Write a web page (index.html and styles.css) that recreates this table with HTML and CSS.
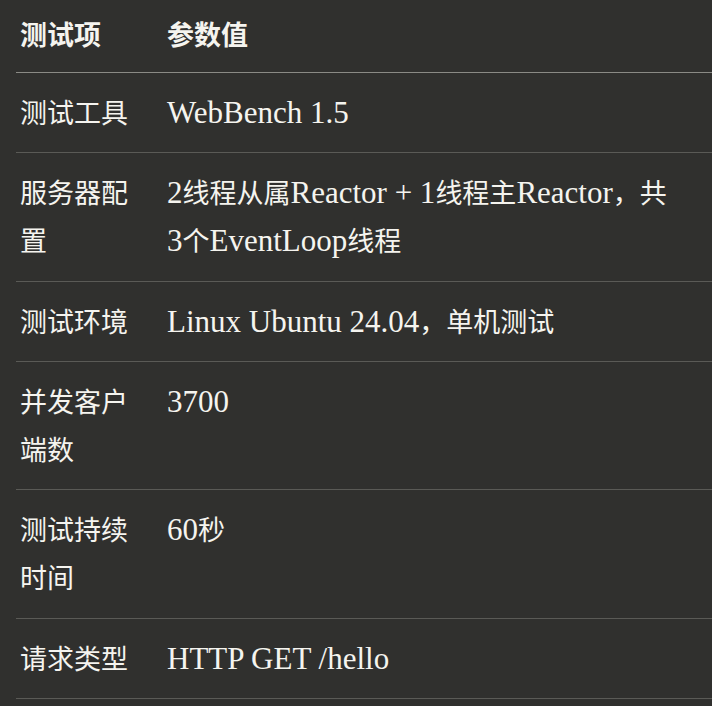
FILE: index.html
```html
<!DOCTYPE html>
<html lang="zh">

<head>
  <meta charset="UTF-8">
  <meta name="viewport" content="width=device-width, initial-scale=1.0">
  <title>测试参数</title>
  <link rel="stylesheet" href="styles.css">
</head>

<body>
  <table class="spec-table">
    <thead>
      <tr>
        <th class="col-key">测试项</th>
        <th>参数值</th>
      </tr>
    </thead>
    <tbody>
      <tr>
        <td class="col-key">测试工具</td>
        <td><span class="latin">WebBench 1.5</span></td>
      </tr>
      <tr>
        <td class="col-key">服务器配置</td>
        <td><span class="latin">2</span>线程从属<span class="latin">Reactor + 1</span>线程主<span class="latin">Reactor</span>，共<span class="keep"><span class="latin">3</span>个</span><span class="latin">EventLoop</span>线程</td>
      </tr>
      <tr>
        <td class="col-key">测试环境</td>
        <td><span class="latin">Linux Ubuntu 24.04</span>，单机测试</td>
      </tr>
      <tr>
        <td class="col-key">并发客户端数</td>
        <td><span class="latin">3700</span></td>
      </tr>
      <tr>
        <td class="col-key">测试持续时间</td>
        <td><span class="latin">60</span>秒</td>
      </tr>
      <tr>
        <td class="col-key">请求类型</td>
        <td><span class="latin">HTTP GET /hello</span></td>
      </tr>
    </tbody>
  </table>
</body>

</html>
```

FILE: styles.css
```css
:root {
  --bg-color: #30302e;
  --text-color: #f5f4ef;
  --head-border-color: #8a8a85;
  --row-border-color: #5a5a56;
}

* {
  box-sizing: border-box;
}

body {
  margin: 0;
  padding: 0 0 0 16px;
  background-color: var(--bg-color);
  color: var(--text-color);
  font-family: "Liberation Serif", "Noto Sans CJK SC", serif;
  font-size: 27px;
  -webkit-font-smoothing: antialiased;
}

.spec-table {
  width: 100%;
  border-collapse: collapse;
}

.spec-table th,
.spec-table td {
  text-align: left;
  vertical-align: top;
  line-height: 48px;
  padding: 17px 16px 14.33px 4px;
}

.spec-table th {
  font-weight: bold;
  padding: 12px 4px;
  border-bottom: 1px solid var(--head-border-color);
}

.spec-table td {
  border-bottom: 1px solid var(--row-border-color);
}

.col-key {
  width: 147px;
}

.spec-table td.col-key {
  padding-right: 14px;
}

.latin {
  font-size: 31px;
  line-height: 1;
}

.keep {
  white-space: nowrap;
}
```
